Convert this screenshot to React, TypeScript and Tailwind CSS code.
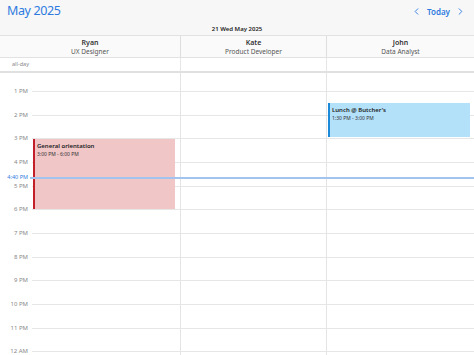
import React from 'react';
import { ChevronLeft, ChevronRight } from 'lucide-react';

const hours = ['1 PM', '2 PM', '3 PM', '4 PM', '5 PM', '6 PM', '7 PM', '8 PM', '9 PM', '10 PM', '11 PM', '12 AM'];

const people = [
  { name: 'Ryan', role: 'UX Designer' },
  { name: 'Kate', role: 'Product Developer' },
  { name: 'John', role: 'Data Analyst' },
];

const HourLines: React.FC = () => (
  <div className="flex flex-col pt-[18px]">
    {hours.map((h) => (
      <div key={h} className="h-[23.66px] shrink-0 border-t border-[#e6e6e6]" />
    ))}
  </div>
);

const App: React.FC = () => {
  return (
    <div className="w-[474px] h-[355px] overflow-hidden bg-white text-[#333]" style={{ fontFamily: '"Noto Sans", "Open Sans", sans-serif' }}>
      {/* top bar */}
      <div className="h-[35px] bg-[#f7f7f7] flex flex-col">
        <div className="flex items-center justify-between pl-[7px] pr-[8px] h-[23px]">
          <span className="text-[12.5px] text-[#2d7be0] leading-none tracking-[-0.4px]">May 2025</span>
          <div className="flex items-center gap-[5px] text-[#2d7be0]">
            <ChevronLeft size={11} strokeWidth={2} />
            <span className="text-[8px] font-semibold leading-none">Today</span>
            <ChevronRight size={11} strokeWidth={2} />
          </div>
        </div>
        <div className="flex-1 flex items-center justify-center text-[6px] font-semibold text-[#222]">21 Wed May 2025</div>
      </div>

      {/* resource headers */}
      <div className="h-[23px] grid grid-cols-[180px_146px_148px] bg-[#fafafa] border-t border-b border-[#e2e2e2]">
        {people.map((p, i) => (
          <div key={p.name} className={`flex flex-col items-center justify-center leading-[9px] ${i > 0 ? 'border-l border-[#dedede]' : ''}`}>
            <span className="text-[7px] font-semibold text-[#333]">{p.name}</span>
            <span className="text-[6.5px] text-[#555]">{p.role}</span>
          </div>
        ))}
      </div>

      {/* all-day */}
      <div className="h-[15px] grid grid-cols-[180px_146px_148px] border-b-2 border-[#e0e0e0]">
        <div className="flex items-center pl-[12px] text-[5.5px] text-[#888]">all-day</div>
        <div className="border-l border-[#e6e6e6]" />
        <div className="border-l border-[#e6e6e6]" />
      </div>

      {/* body */}
      <div className="relative h-[282px] overflow-hidden flex">
        <div className="w-[32px] shrink-0 flex flex-col pt-[18px]">
          {hours.map((h) => (
            <div key={h} className="h-[23.66px] shrink-0 relative">
              <span className="absolute right-[4px] -top-[4px] text-[6px] leading-[8px] text-[#888]">{h}</span>
            </div>
          ))}
        </div>
        <div className="flex-1 grid grid-cols-[148px_146px_148px]">
          <div className="relative">
            <HourLines />
            <div className="absolute left-[1px] right-[5px] top-[65.5px] h-[70px] bg-[#f0c6c7] border-l-2 border-[#c21f2a] px-[2px] pt-[3px] leading-[8px]">
              <div className="text-[6px] font-semibold text-[#222]">General orientation</div>
              <div className="text-[5px] text-[#333]">3:00 PM - 6:00 PM</div>
            </div>
          </div>
          <div className="relative border-l border-[#e4e4e4]">
            <HourLines />
          </div>
          <div className="relative border-l border-[#e4e4e4]">
            <HourLines />
            <div className="absolute left-[1px] right-[4px] top-[30px] h-[34px] bg-[#b3e1fa] border-l-2 border-[#1c8ad8] px-[2px] pt-[3px] leading-[8px]">
              <div className="text-[6px] font-semibold text-[#222]">Lunch @ Butcher's</div>
              <div className="text-[5px] text-[#333]">1:30 PM - 3:00 PM</div>
            </div>
          </div>
        </div>
        {/* current time */}
        <span className="absolute left-0 w-[30px] top-[101px] text-right pr-[2px] text-[5.5px] leading-[6px] text-[#2d7be0]">4:40 PM</span>
        <div className="absolute left-[30px] right-0 top-[104px] h-[2px] bg-[#a3c3ef]" />
      </div>
    </div>
  );
};

export default App;
